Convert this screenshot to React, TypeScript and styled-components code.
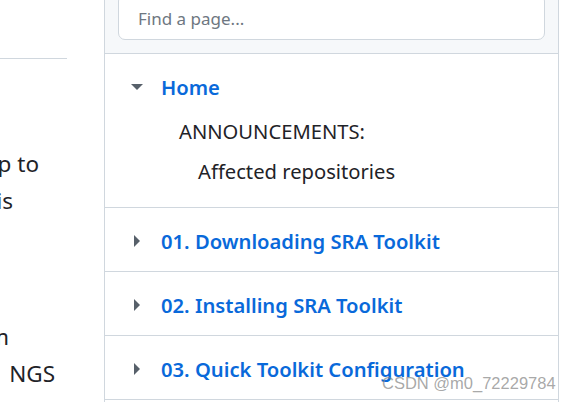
import styled, { createGlobalStyle } from "styled-components";

const GlobalStyle = createGlobalStyle`
    html, body {
        margin: 0;
        padding: 0;
        background: #ffffff;
        overflow: hidden;
    }
    body {
        font-family: "Noto Sans", "Open Sans", "Liberation Sans", sans-serif;
        color: #1f2328;
    }
`;

const Page = styled.div`
    position: relative;
    display: flex;
    width: 573px;
    height: 402px;
    overflow: hidden;
`;

const Main = styled.div`
    width: 104px;
    flex-shrink: 0;
    overflow: hidden;
`;

const Rule = styled.div`
    width: 67px;
    margin-top: 58px;
    border-top: 1px solid #d0d7de;
`;

const Paragraph = styled.div<{ gap: number }>`
    margin-top: ${props => props.gap}px;
    font-size: 22.5px;
    line-height: 37px;
`;

const Line = styled.div<{ end: number }>`
    display: flex;
    justify-content: flex-end;
    width: ${props => props.end}px;
    white-space: pre;
    overflow: hidden;
`;

const Sidebar = styled.nav`
    width: 453px;
    flex-shrink: 0;
    border-left: 1px solid #d0d7de;
    border-right: 1px solid #d0d7de;
    display: flex;
    flex-direction: column;
`;

const SearchBar = styled.div`
    background: #f6f8fa;
    border-bottom: 1px solid #d0d7de;
    padding: 0 12px 13px 13px;
    height: 40px;
`;

const SearchInput = styled.input`
    box-sizing: border-box;
    display: block;
    width: 427px;
    height: 46px;
    margin-top: -6px;
    padding: 2px 19px 0;
    border: 1px solid #d0d7de;
    border-radius: 7px;
    background: #ffffff;
    font-family: inherit;
    font-size: 17px;
    color: #1f2328;
    outline: none;

    &::placeholder {
        color: #6e7781;
    }
`;

const Item = styled.div`
    border-bottom: 1px solid #d0d7de;
    padding: 19px 0 16px 25px;
`;

const ItemHead = styled.div`
    display: flex;
    align-items: center;
    height: 28px;
`;

const Toggle = styled.span`
    width: 13px;
    display: flex;
    justify-content: center;
    margin-right: 18px;
    color: #57606a;
`;

const ItemLink = styled.a`
    font-size: 20.2px;
    font-weight: 600;
    color: #0969da;
    text-decoration: none;
    white-space: nowrap;
`;

const SubList = styled.div`
    padding-top: 10px;
    padding-left: 49px;
    font-size: 20.2px;
    line-height: 40px;
`;

const SubItem = styled.div<{ depth: number }>`
    padding-left: ${props => props.depth * 19}px;
    white-space: nowrap;
`;

const Watermark = styled.div`
    position: absolute;
    left: 382px;
    top: 374px;
    font-family: "Liberation Sans", Arial, sans-serif;
    font-size: 16.5px;
    color: rgba(130, 130, 130, 0.7);
    white-space: nowrap;
    pointer-events: none;
`;

function Caret({ open }: { open: boolean }) {
    return open ? (
        <svg width="12" height="6" viewBox="0 0 12 6">
            <path d="M0 0 L12 0 L6 6 Z" fill="currentColor" />
        </svg>
    ) : (
        <svg width="6" height="12" viewBox="0 0 6 12">
            <path d="M0 0 L6 6 L0 12 Z" fill="currentColor" />
        </svg>
    );
}

const pages = [
    "01. Downloading SRA Toolkit",
    "02. Installing SRA Toolkit",
    "03. Quick Toolkit Configuration",
];

export default function App() {
    return <>
        <GlobalStyle />
        <Page>
            <Main>
                <Rule />
                <Paragraph gap={86}>
                    <Line end={39}>This guide will help you set up to</Line>
                    <Line end={13}>work with the toolkit. It is</Line>
                </Paragraph>
                <Paragraph gap={99}>
                    <Line end={9}>Use the SRA Toolkit to download data from</Line>
                    <Line end={55}>{"the Sequence Read Archive and process\u2002NGS"}</Line>
                </Paragraph>
            </Main>

            <Sidebar>
                <SearchBar>
                    <SearchInput placeholder="Find a page..." />
                </SearchBar>

                <Item>
                    <ItemHead>
                        <Toggle><Caret open /></Toggle>
                        <ItemLink href="#">Home</ItemLink>
                    </ItemHead>
                    <SubList>
                        <SubItem depth={0}>ANNOUNCEMENTS:</SubItem>
                        <SubItem depth={1}>Affected repositories</SubItem>
                    </SubList>
                </Item>

                {pages.map(name => (
                    <Item key={name}>
                        <ItemHead>
                            <Toggle><Caret open={false} /></Toggle>
                            <ItemLink href="#">{name}</ItemLink>
                        </ItemHead>
                    </Item>
                ))}
            </Sidebar>

            <Watermark>CSDN @m0_72229784</Watermark>
        </Page>
    </>
}
